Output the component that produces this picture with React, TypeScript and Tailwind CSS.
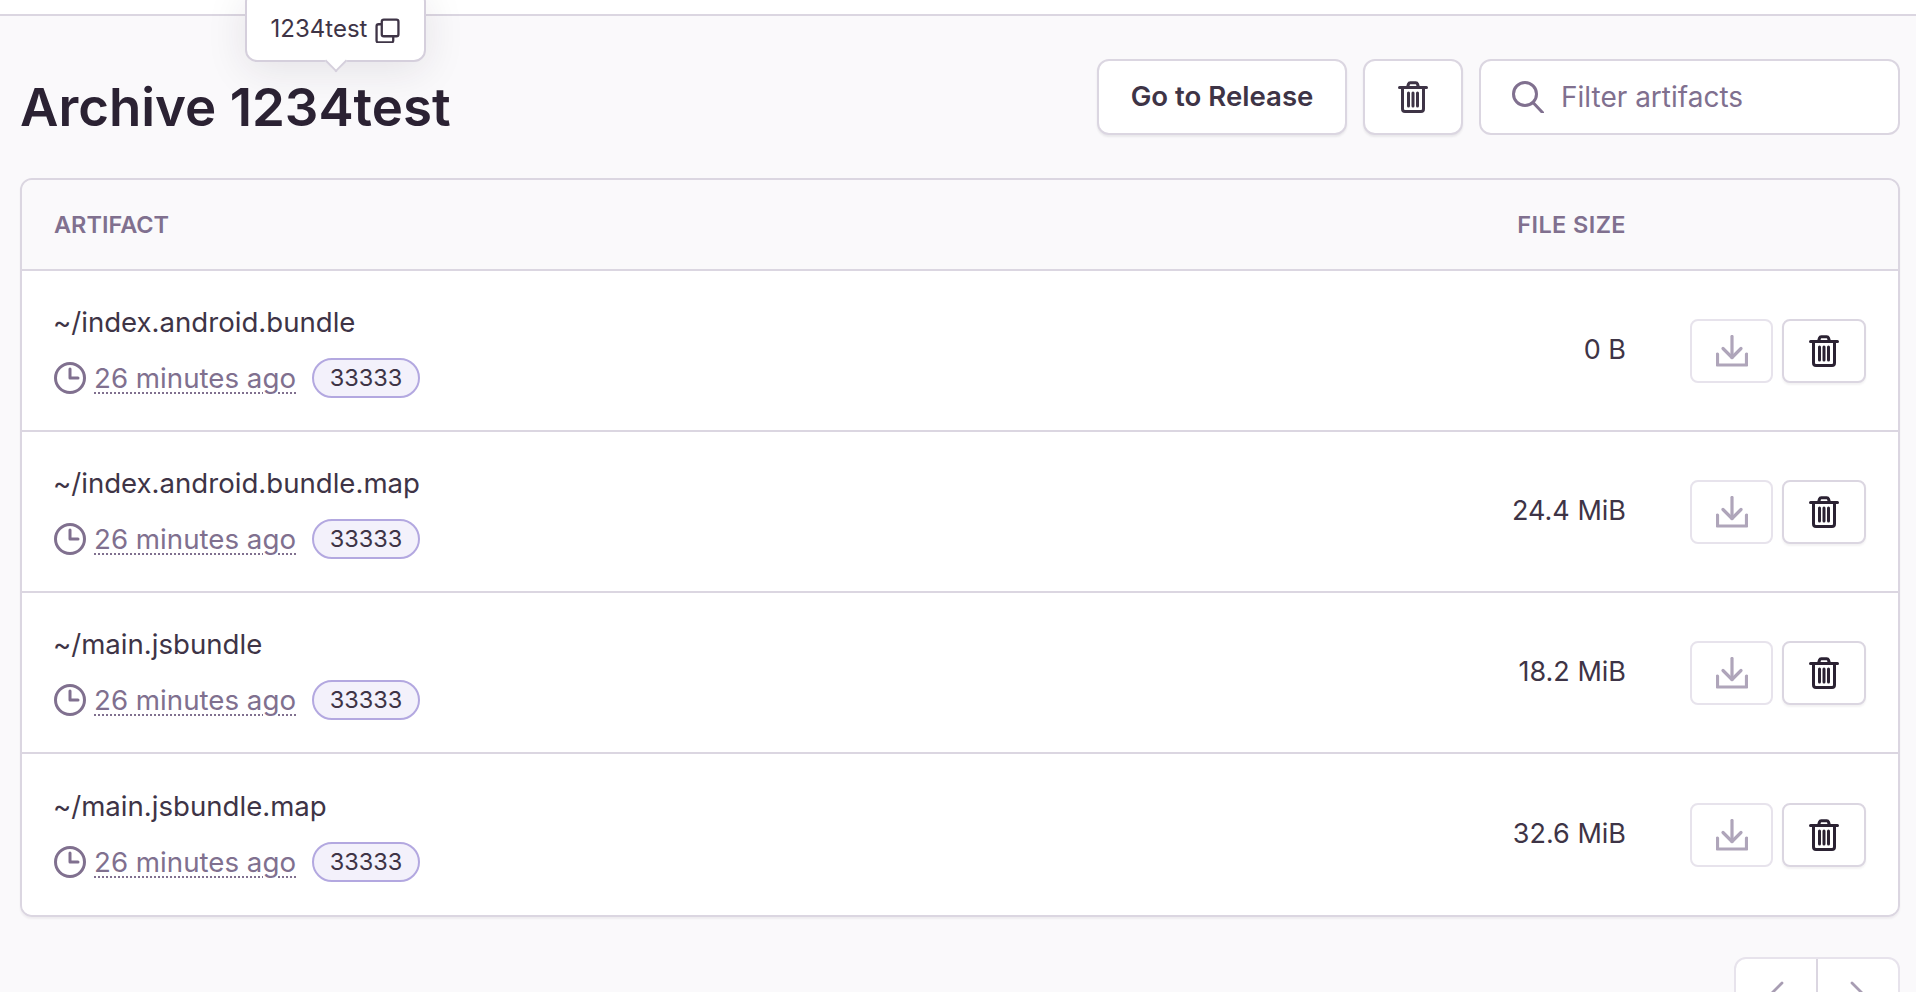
import React from "react";

const Trash = ({ className = "" }: { className?: string }) => (
  <svg viewBox="0 0 30 32" className={className} fill="none" stroke="currentColor" strokeWidth="3" strokeLinecap="round" strokeLinejoin="round">
    <path d="M1.5 6.5h27" />
    <path d="M4.5 6.5v21.500a2.500 2.500 0 0 0 2.500 2.500h16a2.500 2.500 0 0 0 2.500-2.500V6.500" />
    <path d="M9.500 6.500l1-3.500a2 2 0 0 1 2-1.300h5a2 2 0 0 1 2 1.300l1 3.500" />
    <path d="M10.500 12v13M15 12v13M19.500 12v13" strokeWidth="3" />
  </svg>
);

const Download = ({ className = "" }: { className?: string }) => (
  <svg viewBox="0 0 32 32" className={className} fill="none" stroke="currentColor" strokeWidth="3.2" strokeLinecap="round" strokeLinejoin="round">
    <path d="M16 1.500v21" />
    <path d="M7 13.500l9 9 9-9" />
    <path d="M1.500 19v11h29V19" />
  </svg>
);

const Clock = () => (
  <svg viewBox="0 0 32 32" className="w-[32px] h-[32px] shrink-0 text-[#80708f]" fill="none" stroke="currentColor" strokeWidth="3" strokeLinecap="round" strokeLinejoin="round">
    <circle cx="16" cy="16" r="14.500" />
    <path d="M16 7v9h8" />
  </svg>
);

const Row = ({ name, size, last }: { name: string; size: string; last?: boolean }) => (
  <div className={`flex items-center h-[161px] bg-white pl-[32px] pr-[32px] ${last ? "" : "border-b-2 border-[#dbd6e1]"}`}>
    <div className="flex-1 flex flex-col gap-[18px] pt-[1px]">
      <div className="-ml-[1px] text-[27.6px] leading-[36px] text-[#3e3446]">{name}</div>
      <div className="flex items-center h-[40px]">
        <Clock />
        <span className="ml-[8px] text-[27.7px] leading-[36px] text-[#80708f] underline decoration-dotted decoration-[2px] underline-offset-[4px]">26 minutes ago</span>
        <span className="ml-[16px] flex items-center justify-center w-[108px] h-[40px] rounded-full border-2 border-[#b3a8e0] bg-[#f3f1fb] text-[23.5px] text-[#3e3446]">33333</span>
      </div>
    </div>
    <div className="w-[400px] text-right text-[27px] text-[#3e3446]">{size}</div>
    <div className="ml-[64px] flex gap-[9px]">
      <button className="flex items-center justify-center w-[83px] h-[64px] rounded-[8px] border-2 border-[#e7e3ec] bg-white text-[#afa5ba]">
        <Download className="w-[32px] h-[32px]" />
      </button>
      <button className="flex items-center justify-center w-[84px] h-[64px] rounded-[8px] border-2 border-[#dbd6e1] bg-white shadow-[0_2px_2px_rgba(43,34,51,0.06)] text-[#2b2233]">
        <Trash className="w-[30px] h-[32px]" />
      </button>
    </div>
  </div>
);

export default function App() {
  return (
    <div className="relative h-[992px] overflow-hidden bg-[#faf9fb] font-['Inter','Liberation_Sans',sans-serif]">
      <div className="h-[16px] bg-white border-b-2 border-[#dbd6e1]" />

      <div className="absolute left-[245px] top-[-10px] w-[181px] h-[72px] rounded-[12px] border-2 border-[#d5cfdc] bg-white shadow-[0_8px_40px_rgba(43,34,51,0.10)] flex items-end justify-center pb-[15px] gap-[8px] text-[#3e3446] text-[24px] leading-[32px]">
        <span>1234test</span>
        <svg viewBox="0 0 24 24" className="w-[25px] h-[25px] mb-[2px]" fill="none" stroke="currentColor" strokeWidth="2.200" strokeLinejoin="round">
          <rect x="6.500" y="1.500" width="16" height="16" rx="2" />
          <path d="M6.500 6H3.500a2 2 0 0 0-2 2v13.500a2 2 0 0 0 2 2h12a2 2 0 0 0 2-2v-4" />
        </svg>
        <div className="absolute left-[81px] bottom-[-9px] w-[16px] h-[16px] rotate-45 bg-white border-r-2 border-b-2 border-[#d5cfdc]" />
      </div>

      <div className="flex items-start justify-between pl-[20px] pr-[16px] pt-[43px]">
        <h1 className="mt-[17px] text-[52.8px] leading-[62px] font-semibold text-[#2b2233]">Archive 1234test</h1>
        <div className="flex">
          <button className="w-[250px] h-[76px] rounded-[12px] border-2 border-[#dbd6e1] bg-white shadow-[0_2px_2px_rgba(43,34,51,0.08)] text-[27.6px] font-semibold text-[#3e3446]">Go to Release</button>
          <button className="ml-[16px] flex items-center justify-center w-[100px] h-[76px] rounded-[12px] border-2 border-[#dbd6e1] bg-white shadow-[0_2px_2px_rgba(43,34,51,0.08)] text-[#3e3446]">
            <Trash className="w-[30px] h-[32px]" />
          </button>
          <div className="ml-[16px] flex items-center w-[421px] h-[76px] rounded-[12px] border-2 border-[#dbd6e1] bg-white pl-[31px]">
            <svg viewBox="0 0 32 32" className="w-[32px] h-[32px] text-[#80708f]" fill="none" stroke="currentColor" strokeWidth="3" strokeLinecap="round">
              <circle cx="13" cy="13" r="11.500" />
              <path d="M21 21.500L31 32" />
            </svg>
            <span className="ml-[17px] text-[28px] text-[#80708f]">Filter artifacts</span>
          </div>
        </div>
      </div>

      <div className="ml-[20px] mr-[16px] mt-[40px] rounded-[12px] border-2 border-[#dbd6e1] overflow-hidden shadow-[0_2px_2px_rgba(43,34,51,0.06)]">
        <div className="flex items-center h-[91px] bg-[#faf9fb] border-b-2 border-[#dbd6e1] pl-[32px] pr-[32px] text-[23.5px] font-semibold text-[#80708f] uppercase">
          <div className="flex-1">Artifact</div>
          <div className="w-[400px] text-right tracking-[0.4px]">File size</div>
          <div className="ml-[64px] w-[176px]" />
        </div>
        <Row name="~/index.android.bundle" size="0 B" />
        <Row name="~/index.android.bundle.map" size="24.4 MiB" />
        <Row name="~/main.jsbundle" size="18.2 MiB" />
        <Row name="~/main.jsbundle.map" size="32.6 MiB" last />
      </div>

      <div className="flex justify-end mr-[16px] mt-[40px]">
        <div className="flex w-[166px] h-[76px] rounded-[12px] border-2 border-[#e7e3ec] bg-white text-[#a89db3]">
          <div className="flex-1 flex items-center justify-center border-r-2 border-[#dbd6e1]">
            <svg viewBox="0 0 16 28" className="w-[16px] h-[28px]" fill="none" stroke="currentColor" strokeWidth="2.800" strokeLinecap="round" strokeLinejoin="round"><path d="M14 2L2 14l12 12" /></svg>
          </div>
          <div className="flex-1 flex items-center justify-center">
            <svg viewBox="0 0 16 28" className="w-[16px] h-[28px]" fill="none" stroke="currentColor" strokeWidth="2.800" strokeLinecap="round" strokeLinejoin="round"><path d="M2 2l12 12L2 26" /></svg>
          </div>
        </div>
      </div>
    </div>
  );
}
